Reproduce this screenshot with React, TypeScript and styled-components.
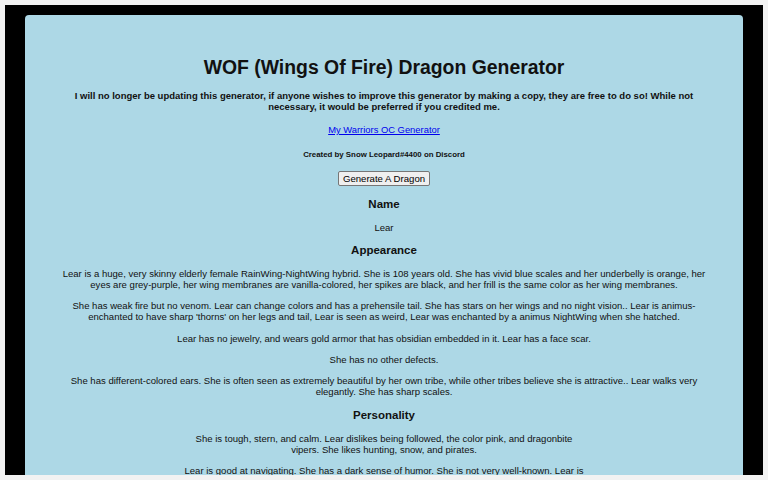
import styled, { createGlobalStyle } from "styled-components";

const GlobalStyle = createGlobalStyle`
  body {
    margin: 0;
    background: #f2f2f2;
    font-family: "Liberation Sans", Arial, sans-serif;
  }
`;

const Frame = styled.div`
  margin: 5px;
  height: 470px;
  overflow: hidden;
  background: #000;
  padding: 10px 20px 0;
  box-sizing: border-box;
`;

const Card = styled.main`
  background: #add8e6;
  border-radius: 4px;
  padding: 40px 36px 20px;
  text-align: center;
  color: #111;
  min-height: 600px;
`;

const Title = styled.h1`
  font-size: 19.4px;
  line-height: 24px;
  font-weight: bold;
  margin: 0 0 11px;
`;

const Notice = styled.p`
  font-size: 9.5px;
  line-height: 11px;
  font-weight: bold;
  margin: 0 0 12px;
`;

const GenLink = styled.a`
  display: block;
  font-size: 9.4px;
  line-height: 11px;
  color: #0000ee;
  margin: 0 auto 14.5px;
  width: fit-content;
`;

const Credit = styled.p`
  font-size: 7.85px;
  line-height: 10px;
  font-weight: bold;
  margin: 0 0 11.5px;
`;

const GenButton = styled.button`
  display: block;
  margin: 0 auto 10.5px;
  font-family: "Liberation Sans", Arial, sans-serif;
  font-size: 9.6px;
  line-height: 11px;
  padding: 1px 4px;
  height: 15px;
  background: #efefef;
  border: 1px solid #767676;
  border-radius: 2px;
  color: #000;
`;

const Heading = styled.h2`
  font-size: 11.5px;
  line-height: 14px;
  font-weight: bold;
  margin: 0 0 11px;
`;

const Text = styled.p<{ $narrow?: boolean }>`
  font-size: 9.55px;
  line-height: 11px;
  margin: 0 auto 10.4px;
  max-width: ${({ $narrow }) => ($narrow ? "400px" : "none")};
`;

const appearance = [
  "Lear is a huge, very skinny elderly female RainWing-NightWing hybrid. She is 108 years old. She has vivid blue scales and her underbelly is orange, her eyes are grey-purple, her wing membranes are vanilla-colored, her spikes are black, and her frill is the same color as her wing membranes.",
  "She has weak fire but no venom. Lear can change colors and has a prehensile tail. She has stars on her wings and no night vision.. Lear is animus-enchanted to have sharp 'thorns' on her legs and tail, Lear is seen as weird, Lear was enchanted by a animus NightWing when she hatched.",
  "Lear has no jewelry, and wears gold armor that has obsidian embedded in it. Lear has a face scar.",
  "She has no other defects.",
  "She has different-colored ears. She is often seen as extremely beautiful by her own tribe, while other tribes believe she is attractive.. Lear walks very elegantly. She has sharp scales.",
];

const personality = [
  "She is tough, stern, and calm. Lear dislikes being followed, the color pink, and dragonbite vipers. She likes hunting, snow, and pirates.",
  "Lear is good at navigating. She has a dark sense of humor. She is not very well-known. Lear is loyal to her friends and family.",
];

export default function App() {
  return (
    <>
      <GlobalStyle />
      <Frame>
        <Card>
          <Title>WOF (Wings Of Fire) Dragon Generator</Title>
          <Notice>
            I will no longer be updating this generator, if anyone wishes to improve this generator by
            making a copy, they are free to do so! While not necessary, it would be preferred if you
            credited me.
          </Notice>
          <GenLink href="#">My Warriors OC Generator</GenLink>
          <Credit>Created by Snow Leopard#4400 on Discord</Credit>
          <GenButton>Generate A Dragon</GenButton>

          <Heading>Name</Heading>
          <Text>Lear</Text>

          <Heading>Appearance</Heading>
          {appearance.map((p) => (
            <Text key={p}>{p}</Text>
          ))}

          <Heading>Personality</Heading>
          {personality.map((p) => (
            <Text key={p} $narrow>
              {p}
            </Text>
          ))}
        </Card>
      </Frame>
    </>
  );
}
